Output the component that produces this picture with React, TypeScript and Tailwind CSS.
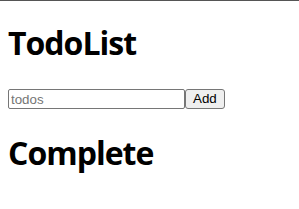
import { useState } from 'react'

export default function App() {
  const [text, setText] = useState('')

  return (
    <div className="min-h-[209px] bg-white border-t border-[#555] font-['Open_Sans',sans-serif] text-black">
      <div className="px-2">
        <h1 className="mt-[20px] mb-[25px] text-[32px] leading-[43px] font-bold tracking-[-1px]">TodoList</h1>
        <div className="flex items-center">
          <input
            value={text}
            onChange={e => setText(e.target.value)}
            placeholder="todos"
            className="w-[177px] h-[20px] px-[2px] border border-[#767676] rounded-[2px] text-[13.33px] font-['Liberation_Sans',sans-serif] placeholder:text-[#757575] outline-none"
          />
          <button className="h-[20px] px-[7px] bg-[#efefef] border border-[#767676] rounded-[3px] text-[13.33px] leading-none font-['Liberation_Sans',sans-serif]">Add</button>
        </div>
        <h1 className="mt-[22px] text-[32px] leading-[43px] font-bold tracking-[-1px]">Complete</h1>
      </div>
    </div>
  )
}
